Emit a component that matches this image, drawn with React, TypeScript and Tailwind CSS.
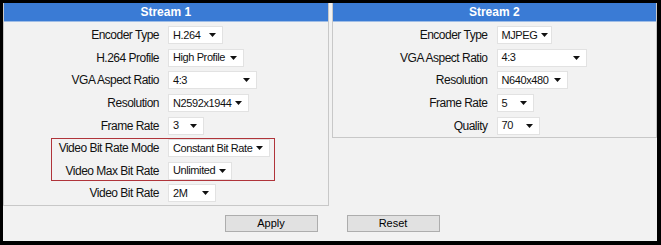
import React from "react";

type Row = { label: string; value: string; width: number };

const stream1: Row[] = [
  { label: "Encoder Type", value: "H.264", width: 55 },
  { label: "H.264 Profile", value: "High Profile", width: 76 },
  { label: "VGA Aspect Ratio", value: "4:3", width: 89 },
  { label: "Resolution", value: "N2592x1944", width: 81 },
  { label: "Frame Rate", value: "3", width: 36 },
  { label: "Video Bit Rate Mode", value: "Constant Bit Rate", width: 102 },
  { label: "Video Max Bit Rate", value: "Unlimited", width: 64 },
  { label: "Video Bit Rate", value: "2M", width: 48 },
];

const stream2: Row[] = [
  { label: "Encoder Type", value: "MJPEG", width: 55 },
  { label: "VGA Aspect Ratio", value: "4:3", width: 90 },
  { label: "Resolution", value: "N640x480", width: 71 },
  { label: "Frame Rate", value: "5", width: 37 },
  { label: "Quality", value: "70", width: 43 },
];

function Select({ value, width }: { value: string; width: number }) {
  return (
    <div
      className="flex h-[18px] items-center justify-between border border-[#e2e2e2] bg-white pl-[4px] pr-[6px] text-[11px] tracking-[-0.4px] text-[#111]"
      style={{ width }}
    >
      <span className="whitespace-nowrap leading-none">{value}</span>
      <svg width="7" height="4" viewBox="0 0 7 4" className="ml-[4px] shrink-0">
        <path d="M0 0h7L3.5 4z" fill="#111" />
      </svg>
    </div>
  );
}

function FieldRow({ row, labelW }: { row: Row; labelW: number }) {
  return (
    <div className="flex h-[22.6px] items-center">
      <div
        className="shrink-0 whitespace-nowrap pr-[9px] text-right text-[12px] tracking-[-0.5px] text-[#111]"
        style={{ width: labelW }}
      >
        {row.label}
      </div>
      <Select value={row.value} width={row.width} />
    </div>
  );
}

function Panel({
  title,
  rows,
  labelW,
  highlight,
}: {
  title: string;
  rows: Row[];
  labelW: number;
  highlight?: [number, number];
}) {
  const before = highlight ? rows.slice(0, highlight[0]) : rows;
  const mid = highlight ? rows.slice(highlight[0], highlight[1]) : [];
  const after = highlight ? rows.slice(highlight[1]) : [];
  return (
    <div className="flex-1 self-start border border-[#c8c8c8] border-t-0">
      <div className="flex h-[19px] items-center justify-center border-b border-[#9fbde6] bg-[#3a7bd5] text-[12px] font-bold text-white">
        {title}
      </div>
      <div className="pt-[2px]">
        {before.map((r) => (
          <FieldRow key={r.label} row={r} labelW={labelW} />
        ))}
        {mid.length > 0 && (
          <div className="relative">
            <div className="pointer-events-none absolute left-[47px] top-[1px] h-[43px] w-[224px] border border-[#b0343a]" />
            {mid.map((r) => (
              <FieldRow key={r.label} row={r} labelW={labelW} />
            ))}
          </div>
        )}
        {after.map((r) => (
          <FieldRow key={r.label} row={r} labelW={labelW} />
        ))}
      </div>
    </div>
  );
}

export default function App() {
  return (
    <div
      className="h-[245px] w-[661px] bg-black pb-[4px] pl-[3px] pr-[4px] pt-[3px]"
      style={{ fontFamily: '"Liberation Sans", Arial, sans-serif' }}
    >
      <div className="flex h-full flex-col bg-[#f2f2f2]">
        <div className="flex gap-[3px]">
          <Panel title="Stream 1" rows={stream1} labelW={164} highlight={[5, 7]} />
          <Panel title="Stream 2" rows={stream2} labelW={164} />
        </div>
        <div className="mt-[9px] flex justify-center gap-[29px] pl-[4px]">
          <button className="h-[17px] w-[93px] border border-[#adadad] bg-[#e1e1e1] text-[11px] leading-none text-black">
            Apply
          </button>
          <button className="h-[17px] w-[93px] border border-[#adadad] bg-[#e1e1e1] text-[11px] leading-none text-black">
            Reset
          </button>
        </div>
      </div>
    </div>
  );
}
